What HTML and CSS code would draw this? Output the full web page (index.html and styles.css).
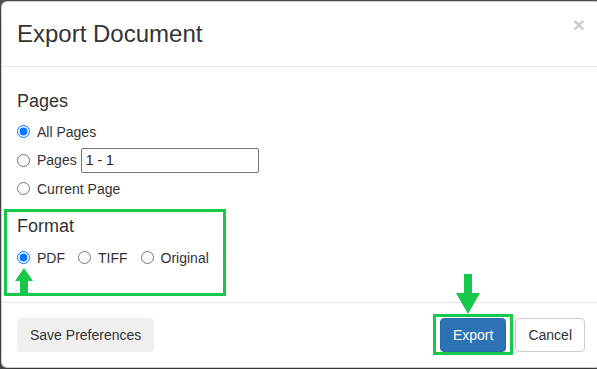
FILE: index.html
```html
<!DOCTYPE html>
<html>
  <head>
    <meta charset="UTF-8">
    <title>Export Document</title>
    <link rel="stylesheet" href="styles.css">
  </head>
  <body>
    <div class="modal">
      <div class="modal-header">
        <h4 class="modal-title">Export Document</h4>
        <button class="close" type="button">&times;</button>
      </div>

      <div class="modal-body">
        <h4 class="section-title">Pages</h4>
        <div class="page-options">
          <label class="option"><input type="radio" name="pages" checked>All Pages</label>
          <label class="option"><input type="radio" name="pages">Pages<input class="page-range" type="text" value="1 - 1"></label>
          <label class="option"><input type="radio" name="pages">Current Page</label>
        </div>

        <div class="format-box">
          <h4 class="section-title">Format</h4>
          <div class="format-options">
            <label class="option"><input type="radio" name="format" checked>PDF</label>
            <label class="option"><input type="radio" name="format">TIFF</label>
            <label class="option"><input type="radio" name="format">Original</label>
          </div>
          <!-- annotation arrow -->
          <svg class="arrow-up" width="18" height="27" viewBox="0 0 18 27">
            <polygon points="9,0 18,13 13,13 13,27 5,27 5,13 0,13"/>
          </svg>
        </div>
      </div>

      <div class="modal-footer">
        <button class="btn btn-default" type="button">Save Preferences</button>
        <div class="actions">
          <span class="highlight">
            <svg class="arrow-down" width="24" height="40" viewBox="0 0 24 40">
              <polygon points="8,0 16,0 16,19 24,19 12,40 0,19 8,19"/>
            </svg>
            <button class="btn btn-primary" type="button">Export</button>
          </span>
          <button class="btn btn-white" type="button">Cancel</button>
        </div>
      </div>
    </div>
  </body>
</html>
```

FILE: styles.css
```css
html { height: 100%; }
body {
  margin: 0;
  height: 369px;
  overflow: hidden;
  background: #555;
  font-family: 'Liberation Sans', Arial, sans-serif;
  font-size: 14px;
  color: #333;
}
.modal {
  box-sizing: border-box;
  width: 600px;
  margin: 1px 0 0 1px;
  background: #fff;
  border: 1px solid rgba(0, 0, 0, .2);
  border-radius: 6px;
  box-shadow: 0 5px 15px rgba(0, 0, 0, .5);
}
.modal-header {
  display: flex;
  justify-content: space-between;
  align-items: flex-start;
  padding: 15px;
  border-bottom: 1px solid #e5e5e5;
}
.modal-title {
  margin: 0;
  font-size: 24px;
  font-weight: 500;
  line-height: 34px;
}
.close {
  margin-top: -3px;
  padding: 0;
  border: 0;
  background: none;
  font-family: 'Liberation Sans', Arial, sans-serif;
  font-size: 21px;
  font-weight: bold;
  line-height: 1;
  color: #000;
  opacity: .2;
  cursor: pointer;
}
.modal-body {
  padding: 15px 15px 6px;
}
.section-title {
  margin: 10px 0;
  font-size: 18px;
  font-weight: 500;
  line-height: 1.1;
}
.page-options {
  display: flex;
  flex-direction: column;
  gap: 6px;
}
.option {
  display: flex;
  align-items: center;
  min-height: 20px;
  line-height: 20px;
}
.option input[type=radio] {
  width: 13px;
  height: 13px;
  margin: 0 7px 0 0;
}
.page-range {
  box-sizing: border-box;
  width: 178px;
  height: 25px;
  margin-left: 4px;
  padding: 0 4px;
  border: 1px solid #767676;
  border-radius: 2px;
  font-family: 'Liberation Sans', Arial, sans-serif;
  font-size: 14px;
  color: #222;
}
.format-box {
  position: relative;
  box-sizing: border-box;
  width: 222px;
  margin: 10px 0 0 -13px;
  padding: 5px 10px 25px;
  border: 3px solid #16c94a;
}
.format-box .section-title {
  margin: 0 0 11px;
}
.format-options {
  display: flex;
  gap: 13px;
}
.arrow-up {
  position: absolute;
  left: 8px;
  top: 56px;
  fill: #16c94a;
}
.modal-footer {
  display: flex;
  justify-content: space-between;
  align-items: center;
  padding: 15px;
  border-top: 1px solid #e5e5e5;
}
.actions {
  display: flex;
  align-items: center;
  gap: 2px;
}
.highlight {
  position: relative;
  display: flex;
  margin: -4px 0 -3px;
  padding: 1px 4px 0;
  border: 3px solid #16c94a;
}
.arrow-down {
  position: absolute;
  left: 20px;
  top: -43px;
  fill: #16c94a;
}
.btn {
  padding: 6px 12px;
  border: 1px solid transparent;
  border-radius: 4px;
  font-family: 'Liberation Sans', Arial, sans-serif;
  font-size: 14px;
  line-height: 20px;
  cursor: pointer;
}
.btn-default {
  background: #efefef;
  border-color: #efefef;
  color: #333;
}
.btn-primary {
  background: #2d73b4;
  border-color: #2a6aa6;
  color: #fff;
}
.btn-white {
  background: #fff;
  border-color: #ccc;
  color: #333;
}
```
